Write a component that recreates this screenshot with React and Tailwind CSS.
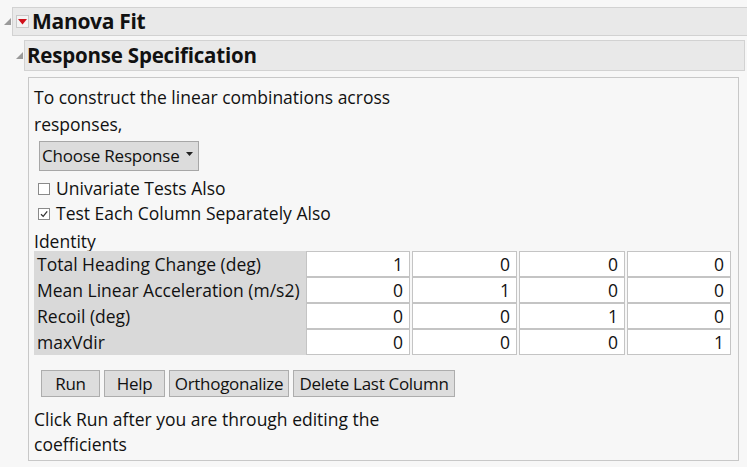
export default function App() {
  const rows = [
    { label: "Total Heading Change (deg)", values: [1, 0, 0, 0] },
    { label: "Mean Linear Acceleration (m/s2)", values: [0, 1, 0, 0] },
    { label: "Recoil (deg)", values: [0, 0, 1, 0] },
    { label: "maxVdir", values: [0, 0, 0, 1] },
  ];

  const Disclosure = () => (
    <svg width="7" height="7" viewBox="0 0 7 7" className="shrink-0">
      <polygon points="7,0 7,7 0,7" fill="#9a9a9a" />
    </svg>
  );

  const Check = ({ checked }) => (
    <span className="flex h-[12px] w-[12px] shrink-0 items-center justify-center border border-[#8a8a8a] bg-white">
      {checked && (
        <svg width="10" height="10" viewBox="0 0 10 10">
          <path d="M2 5.2 L4.2 7.4 L8.2 2.4" fill="none" stroke="#333" strokeWidth="1.3" />
        </svg>
      )}
    </span>
  );

  const Btn = ({ children, w }) => (
    <div
      className={`flex h-[27px] items-center justify-center whitespace-nowrap border border-[#adadad] bg-[#dddddd] text-[17px] tracking-[-0.3px] text-[#111] ${w}`}
    >
      {children}
    </div>
  );

  return (
    <div
      className="h-[467px] w-[747px] overflow-hidden bg-[#f7f7f7] text-[#111]"
      style={{ fontFamily: '"Open Sans", "Noto Sans", sans-serif' }}
    >
      {/* Manova Fit header */}
      <div className="flex items-center pt-[7px]">
        <div className="flex w-[12px] justify-center pl-[2px]">
          <Disclosure />
        </div>
        <div className="-mr-4 flex h-[29px] flex-1 items-center border border-[#d2d2d2] bg-[#e9e9e9] pl-[3px]">
          <span className="mr-[3px] flex h-[13px] w-[13px] items-center justify-center border border-[#c9c9c9] bg-[#f4f4f4]">
            <svg width="9" height="6" viewBox="0 0 9 6">
              <polygon points="0,0 9,0 4.5,5.5" fill="#d0101a" />
            </svg>
          </span>
          <span className="text-[21px] font-bold leading-none tracking-[-0.3px]">Manova Fit</span>
        </div>
      </div>

      {/* Response Specification header */}
      <div className="mt-[4px] flex items-center">
        <div className="flex w-[24px] justify-end pr-[1px]">
          <Disclosure />
        </div>
        <div className="flex h-[31px] w-[721px] items-center border border-[#d2d2d2] bg-[#e9e9e9] pl-[2px]">
          <span className="text-[20.5px] font-bold leading-none tracking-[-0.2px]">Response Specification</span>
        </div>
      </div>

      {/* Content */}
      <div className="ml-[28px] mt-[6px] flex h-[384px] w-[711px] flex-col border border-[#c8c8c8] px-[5px] pt-[6px]">
        <div className="text-[17.5px] leading-[27px]">
          To construct the linear combinations across
          <br />
          responses,
        </div>

        <div className="ml-[5px] mt-[3px] flex h-[30px] w-[160px] items-center whitespace-nowrap border border-[#a7a7a7] bg-[#dcdcdc] pl-[2px] text-[17px] tracking-[-0.2px]">
          Choose Response
          <svg width="7" height="4" viewBox="0 0 7 4" className="ml-[6px] mb-[4px]">
            <polygon points="0,0 7,0 3.5,4" fill="#222" />
          </svg>
        </div>

        <div className="mt-[5px] flex h-[25px] items-center gap-[6px] pl-[4px] text-[17.5px]">
          <Check />
          Univariate Tests Also
        </div>
        <div className="flex h-[25px] items-center gap-[6px] pl-[4px] text-[17.5px]">
          <Check checked />
          Test Each Column Separately Also
        </div>
        <div className="flex h-[25px] items-center pt-[5px] text-[17.5px]">Identity</div>

        <div className="grid w-[701px] grid-cols-[272px_106px_107px_108px_106px]">
          {rows.map((r) => (
            <div key={r.label} className="contents">
              <div className="flex h-[26px] items-center whitespace-nowrap bg-[#d9d9d9] pl-[3px] text-[17.5px]">{r.label}</div>
              {r.values.map((v, i) => (
                <div
                  key={i}
                  className="mr-[2px] flex h-[26px] items-center justify-end border border-[#c4c4c4] bg-white pr-[6px] text-[17.5px]"
                >
                  {v}
                </div>
              ))}
            </div>
          ))}
        </div>

        <div className="ml-[7px] mt-[15px] flex gap-[4px]">
          <Btn w="w-[59px]">Run</Btn>
          <Btn w="w-[61px]">Help</Btn>
          <Btn w="w-[120px]">Orthogonalize</Btn>
          <Btn w="w-[162px]">Delete Last Column</Btn>
        </div>

        <div className="mt-[10px] text-[17.5px] leading-[25px]">
          Click Run after you are through editing the
          <br />
          coefficients
        </div>
      </div>
    </div>
  );
}
